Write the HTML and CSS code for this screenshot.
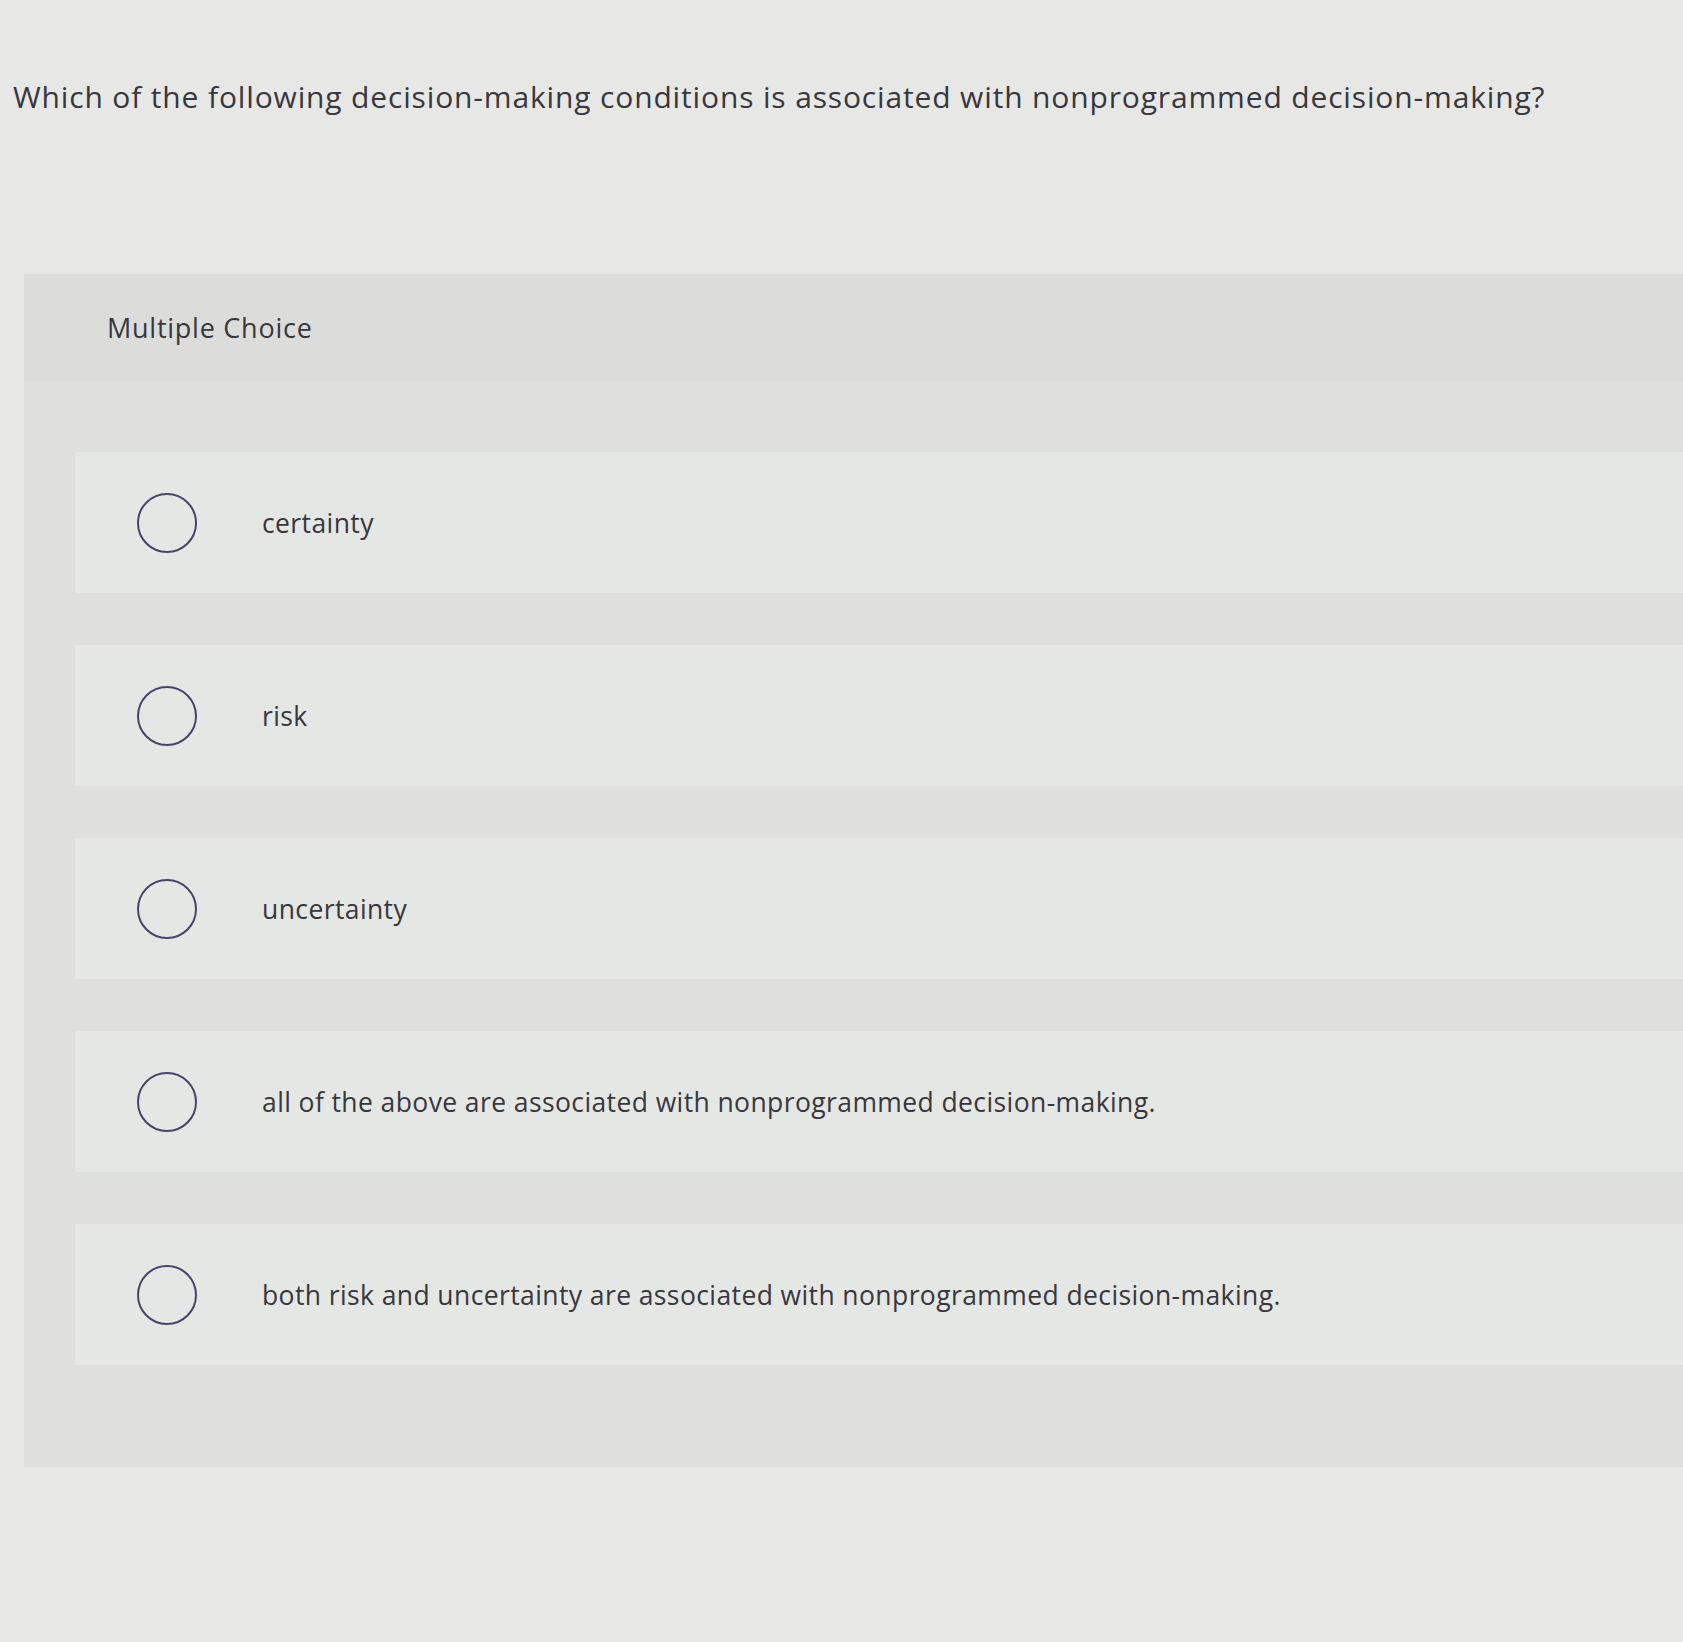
FILE: index.html
```html
<!DOCTYPE html>
<html lang="en">
<head>
<meta charset="utf-8">
<title>Multiple Choice</title>
<link rel="stylesheet" href="styles.css">
</head>
<body>
<div class="page">
  <h1 class="question">Which of the following decision-making conditions is associated with nonprogrammed decision-making?</h1>
  <section class="panel">
    <div class="panel-head">Multiple Choice</div>
    <div class="options">
      <label class="option"><span class="radio"></span><span class="opt-text">certainty</span></label>
      <label class="option"><span class="radio"></span><span class="opt-text">risk</span></label>
      <label class="option"><span class="radio"></span><span class="opt-text">uncertainty</span></label>
      <label class="option"><span class="radio"></span><span class="opt-text">all of the above are associated with nonprogrammed decision-making.</span></label>
      <label class="option"><span class="radio"></span><span class="opt-text">both risk and uncertainty are associated with nonprogrammed decision-making.</span></label>
    </div>
  </section>
</div>
</body>
</html>
```
FILE: styles.css
```css
html, body {
  margin: 0;
  padding: 0;
  background: #e7e8e6;
}
body {
  font-family: "Open Sans", Lato, "Liberation Sans", sans-serif;
  color: #38373d;
  height: 1642px;
  overflow: hidden;
}
.page {
  padding-top: 78px;
}
.question {
  margin: 0;
  padding-left: 13px;
  font-size: 30px;
  font-weight: 400;
  line-height: 38px;
  letter-spacing: 0.85px;
}
.panel {
  margin-top: 158px;
  margin-left: 24px;
  background: #dfe0de;
  padding-bottom: 102px;
}
.panel-head {
  height: 108px;
  box-sizing: border-box;
  padding-left: 83px;
  padding-top: 36px;
  font-size: 27px;
  line-height: 36px;
  letter-spacing: 0.75px;
  background: #dcdddb;
}
.options {
  display: flex;
  flex-direction: column;
  gap: 52px;
  padding-top: 70px;
  padding-left: 51px;
}
.option {
  display: flex;
  align-items: center;
  height: 141px;
  background: #e5e7e4;
  padding-left: 62px;
}
.radio {
  width: 56px;
  height: 56px;
  border: 2px solid #45446a;
  border-radius: 50%;
  flex: none;
}
.opt-text {
  margin-left: 65px;
  font-size: 26.5px;
  letter-spacing: 0.4px;
}
```
